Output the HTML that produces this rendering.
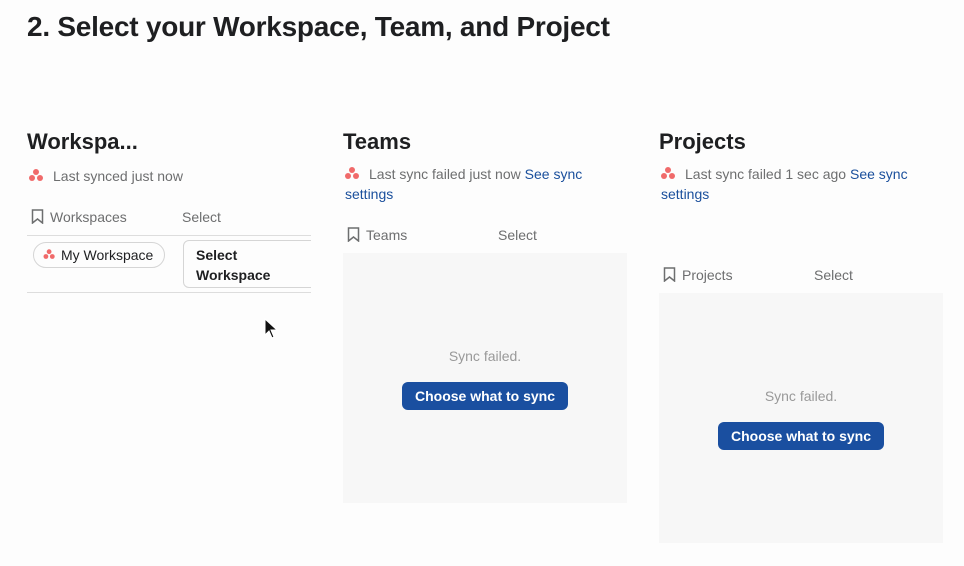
<!DOCTYPE html>
<html><head><meta charset="utf-8"><style>
*{box-sizing:border-box;margin:0;padding:0}
body{width:964px;height:566px;background:#fdfdfd;font-family:"Liberation Sans",sans-serif;color:#1e1f21;position:relative;overflow:hidden}
.abs{position:absolute}
h1{position:absolute;left:27px;top:11px;font-size:28px;font-weight:bold;letter-spacing:-0.25px;white-space:nowrap}
h2{position:absolute;font-size:22px;font-weight:bold;letter-spacing:0px}
.sync{position:absolute;font-size:14px;color:#6d6e6f;line-height:20px;width:284px}
.sync a{color:#1a4f9c;text-decoration:none}
.hdr{position:absolute;font-size:14px;color:#6d6e6f}
.dots{display:inline-block;position:relative;width:15px;height:13px;vertical-align:-1px;margin-right:9px}
.dots i{position:absolute;width:6px;height:6px;border-radius:50%;background:#f06a6a}
.panel{position:absolute;background:#f7f7f7;width:284px}
.fail{position:absolute;width:100%;text-align:center;font-size:14px;color:#999}
.btn{position:absolute;left:59px;width:166px;height:28px;border-radius:6px;background:#1a4fa0;color:#fff;font-size:14px;font-weight:bold;text-align:center;line-height:28px}
.bm{display:inline-block;vertical-align:-2px;margin-right:6px}
</style></head><body>
<h1>2. Select your Workspace, Team, and Project</h1>

<h2 style="left:27px;top:129px">Workspa...</h2>
<div class="sync" style="left:29px;top:166px"><span class="dots"><i style="left:4px;top:0"></i><i style="left:0;top:6px"></i><i style="left:8px;top:6px"></i></span>Last synced just now</div>
<div class="hdr" style="left:31px;top:209px"><svg class="bm" width="13" height="15" viewBox="0 0 13 15"><path d="M1.5 1h10v13l-5-4-5 4z" fill="none" stroke="#6d6e6f" stroke-width="1.5"/></svg>Workspaces</div>
<div class="hdr" style="left:182px;top:209px">Select</div>
<div class="abs" style="left:27px;top:235px;width:284px;height:1px;background:#ddd"></div>
<div class="abs" style="left:33px;top:242px;width:132px;height:26px;border:1px solid #d5d5d5;border-radius:13px;font-size:14px;line-height:24px;padding-left:8px;color:#1e1f21"><span class="dots" style="transform:scale(.8);margin-right:4px"><i style="left:4px;top:0"></i><i style="left:0;top:6px"></i><i style="left:8px;top:6px"></i></span>My Workspace</div>
<div class="abs" style="left:183px;top:240px;width:128px;height:48px;overflow:hidden"><div style="width:140px;height:48px;border:1px solid #d5d5d5;border-radius:6px;font-size:14px;font-weight:bold;line-height:20px;padding:4px 12px">Select<br>Workspace</div></div>
<div class="abs" style="left:27px;top:292px;width:284px;height:1px;background:#ddd"></div>
<svg class="abs" style="left:264px;top:318px" width="14" height="22" viewBox="0 0 14 22"><path d="M1 1v16l4-4 3 7 2-1-3-7h6z" fill="#111" stroke="#fff" stroke-width="1"/></svg>

<h2 style="left:343px;top:129px">Teams</h2>
<div class="sync" style="left:345px;top:164px"><span class="dots"><i style="left:4px;top:0"></i><i style="left:0;top:6px"></i><i style="left:8px;top:6px"></i></span>Last sync failed just now <a>See sync</a><br><a>settings</a></div>
<div class="hdr" style="left:347px;top:227px"><svg class="bm" width="13" height="15" viewBox="0 0 13 15"><path d="M1.5 1h10v13l-5-4-5 4z" fill="none" stroke="#6d6e6f" stroke-width="1.5"/></svg>Teams</div>
<div class="hdr" style="left:498px;top:227px">Select</div>
<div class="panel" style="left:343px;top:253px;height:250px"><div class="fail" style="top:95px">Sync failed.</div><div class="btn" style="top:129px">Choose what to sync</div></div>

<h2 style="left:659px;top:129px">Projects</h2>
<div class="sync" style="left:661px;top:164px"><span class="dots"><i style="left:4px;top:0"></i><i style="left:0;top:6px"></i><i style="left:8px;top:6px"></i></span>Last sync failed 1 sec ago <a>See sync</a><br><a>settings</a></div>
<div class="hdr" style="left:663px;top:267px"><svg class="bm" width="13" height="15" viewBox="0 0 13 15"><path d="M1.5 1h10v13l-5-4-5 4z" fill="none" stroke="#6d6e6f" stroke-width="1.5"/></svg>Projects</div>
<div class="hdr" style="left:814px;top:267px">Select</div>
<div class="panel" style="left:659px;top:293px;height:250px"><div class="fail" style="top:95px">Sync failed.</div><div class="btn" style="top:129px">Choose what to sync</div></div>
</body></html>
